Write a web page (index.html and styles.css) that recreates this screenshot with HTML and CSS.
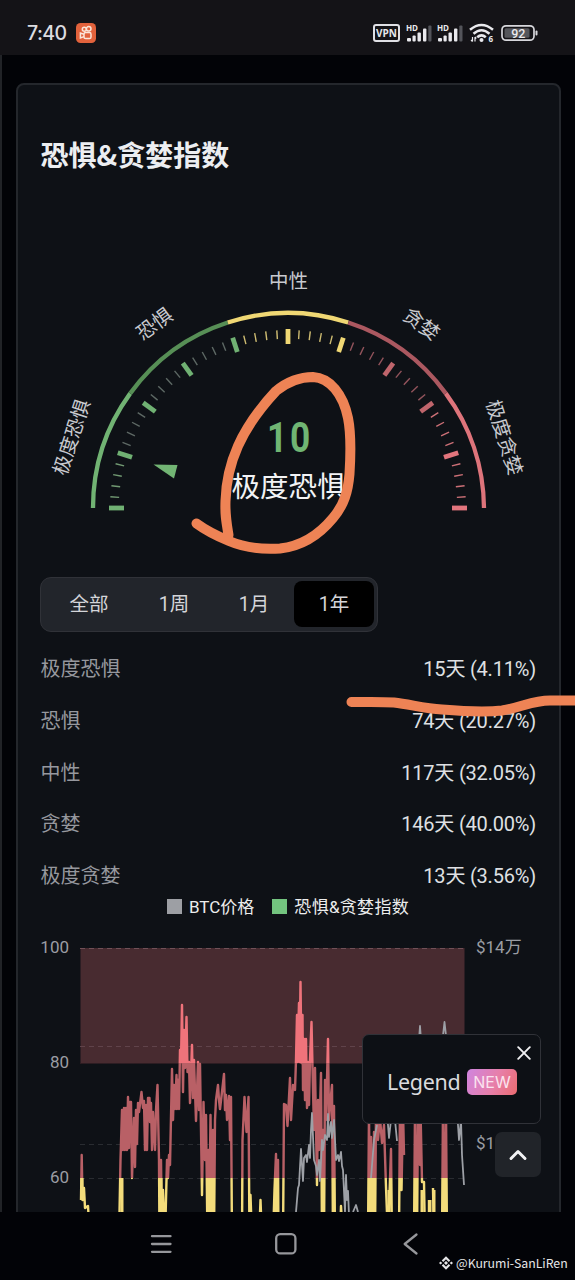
FILE: index.html
```html
<!DOCTYPE html>
<html lang="zh-CN">
<head>
<meta charset="utf-8">
<title>恐惧&amp;贪婪指数</title>
<link rel="stylesheet" href="styles.css">
</head>
<body>
<div class="phone">
  <header class="status">
    <div class="status-left">
      <span class="clock">7:40</span>
      <svg class="app-icon" width="20" height="20" viewBox="0 0 20 20"><rect width="20" height="20" rx="4.5" fill="#e2623c"/><g fill="none" stroke="#fbe5d8" stroke-width="1.5"><circle cx="8.3" cy="6.2" r="2"/><circle cx="12.7" cy="5.8" r="2.3"/><rect x="8" y="9.6" width="7" height="6" rx="1.6"/><path d="M8 11.2 4.4 10v5L8 13.6"/></g></svg>
    </div>
    <div class="status-right">
      <span class="vpn">VPN</span>
      <svg class="signal" width="27" height="20" viewBox="0 0 27 20"><text x="0" y="7.500" class="hd" textLength="12">HD</text><g fill="#e9e9ed"><rect x="1" y="15" width="4" height="3.500" rx="1"/><rect x="6.500" y="12.500" width="3.200" height="6" rx="1"/><rect x="11.500" y="9.500" width="3.400" height="9" rx="1"/><rect x="17" y="5.500" width="3.400" height="13" rx="1"/></g><rect x="22.300" y="2.500" width="3.200" height="16" rx="1" fill="#53545a"/></svg>
      <svg class="signal signal-2" width="27" height="20" viewBox="0 0 27 20"><text x="0" y="7.500" class="hd" textLength="12">HD</text><g fill="#e9e9ed"><rect x="1" y="15" width="4" height="3.500" rx="1"/><rect x="6.500" y="12.500" width="3.200" height="6" rx="1"/><rect x="11.500" y="9.500" width="3.400" height="9" rx="1"/><rect x="17" y="5.500" width="3.400" height="13" rx="1"/></g><rect x="22.300" y="2.500" width="3.200" height="16" rx="1" fill="#53545a"/></svg>
      <svg class="wifi" width="26" height="20" viewBox="0 0 26 20"><g fill="none" stroke="#e9e9ed" stroke-width="2.500"><path d="M1 6.800Q12.500-2.800 24 6.800"/><path d="M4.500 10.800Q12.500 3.800 20.500 10.800"/><path d="M8.200 14.300Q12.500 10.500 16.800 14.300"/></g><circle cx="12.500" cy="17" r="2" fill="#e9e9ed"/><path d="M3.500 14v4.500m0 0-1.500-1.500M6 18.500v-4.500m0 0 1.300 1.500" stroke="#e9e9ed" stroke-width="1.200" fill="none"/><text x="19.500" y="19" class="wifi-gen">6</text></svg>
      <svg class="battery" width="37" height="18" viewBox="0 0 37 18"><rect x="1" y="1.800" width="32" height="14.400" rx="4" fill="none" stroke="#d7d7dc" stroke-width="1.700"/><rect x="3.500" y="4.200" width="25" height="9.600" rx="1.500" fill="#55565b"/><rect x="34.500" y="6.500" width="2" height="5" rx="1" fill="#d7d7dc"/><text x="17.300" y="13.500" text-anchor="middle" class="battery-text">92</text></svg>
    </div>
  </header>

  <main class="viewport">
    <section class="card">
      <h1 class="title">恐惧&amp;贪婪指数</h1>

      <svg class="gauge" viewBox="18 175 541 395">
        <g fill="none" stroke-width="4.300">
          <path stroke="#71b373" d="M93 508A195 195 0 0 1 130.240 393.380"/>
          <path stroke="#578f56" d="M130.240 393.380A195 195 0 0 1 227.740 322.540"/>
          <path stroke="#f0d874" d="M227.740 322.540A195 195 0 0 1 348.260 322.540"/>
          <path stroke="#ab5860" d="M348.260 322.540A195 195 0 0 1 445.760 393.380"/>
          <path stroke="#de747b" d="M445.760 393.380A195 195 0 0 1 484 508"/>
        </g>
        <g id="ticks"></g>
        <g class="zone">
          <text transform="translate(71 437) rotate(-72)" y="7.500">极度恐惧</text>
          <text transform="translate(154 323.500) rotate(-36)" y="7.500">恐惧</text>
          <text transform="translate(288.500 280.500)" y="7">中性</text>
          <text transform="translate(421.500 324) rotate(36)" y="7">贪婪</text>
          <text transform="translate(504.500 437.500) rotate(72)" y="7">极度贪婪</text>
        </g>
        <path d="M153.500 464.500 177.500 465 174 478.500Z" fill="#72b574"/>
        <text class="score" transform="translate(267 451.500) scale(.82 1)">10</text>
        <text class="verdict" x="288.500" y="496.500">极度恐惧</text>
      </svg>

      <nav class="tabs">
        <span class="tab tab-wide">全部</span><span class="tab">1周</span><span class="tab">1月</span><span class="tab tab-active">1年</span>
      </nav>

      <div class="rows">
        <div class="row"><span>极度恐惧</span><span class="value">15天 (4.11%)</span></div>
        <div class="row"><span>恐惧</span><span class="value">74天 (20.27%)</span></div>
        <div class="row"><span>中性</span><span class="value">117天 (32.05%)</span></div>
        <div class="row"><span>贪婪</span><span class="value">146天 (40.00%)</span></div>
        <div class="row"><span>极度贪婪</span><span class="value">13天 (3.56%)</span></div>
      </div>

      <div class="legend">
        <span class="key"><i class="swatch swatch-btc"></i>BTC价格</span>
        <span class="key"><i class="swatch swatch-index"></i><span class="index-name">恐惧&amp;贪婪指数</span></span>
      </div>

      <svg class="chart" viewBox="18 917 541 295">
        <defs>
          <linearGradient id="level" gradientUnits="userSpaceOnUse" x1="0" y1="948" x2="0" y2="1248">
            <stop offset=".385" stop-color="#ef737b"/><stop offset=".385" stop-color="#b96066"/>
            <stop offset=".7667" stop-color="#b96066"/><stop offset=".7667" stop-color="#f3dc7b"/>
          </linearGradient>
        </defs>
        <rect x="80.500" y="948" width="384" height="115.500" fill="#482b30"/>
        <g stroke-dasharray="5 4" stroke-width="1">
          <path d="M80 948.500H465" stroke="#715158"/>
          <path d="M80 1046.500H465" stroke="#60434a"/>
          <path d="M80 1063.500H465" stroke="#2c1c21"/>
          <path d="M80 1144.500H465M80 1178.500H465" stroke="#292c31"/>
        </g>
        <g class="axis">
          <text x="69" y="953" text-anchor="end">100</text>
          <text x="69" y="1068" text-anchor="end">80</text>
          <text x="69" y="1183" text-anchor="end">60</text>
          <text x="476" y="952.500">$14万</text>
          <text x="476" y="1149">$12万</text>
        </g>
        <path fill="none" stroke="url(#level)" stroke-width="2.400" stroke-linejoin="round" d="M81 1200 81.700 1155 82.500 1200 84 1188 85 1208 88 1206 90 1240M119 1240 120.500 1160 122 1110 123 1150 124 1108 125 1150 126 1108 127 1150 128 1097 129 1148 130 1102 131 1102 132 1178 134 1118 135 1167 136 1110 137 1144 138 1103 139 1112 141.500 1092 143 1108 144 1101 145 1150 146 1105 147 1150 148 1098 149.500 1098 150 1122 151 1103 152 1150 153 1112 155 1150 156 1110 157.500 1085 159 1160 159.500 1240 161 1160 162 1240 163 1190 165 1240 167 1160 168 1178 169 1155 170 1165 172 1069 173 1120 174 1085 175 1109 176.500 1075 177 1109 178 1080 179 1109 180 1050 181 1062 182 1005 183 1092 184 1030 185 1068 186.500 1017 187.500 1072 189 1062 190 1103 192 1045 193 1098 194 1060 196 1121 198 1062 199 1110 200 1064 202 1195 203.500 1102 205 1160 206 1115 207.500 1240 208.500 1150 209 1240 210.500 1115 212 1240 213 1130 214 1240 215 1120 216 1100 218 1085 219 1100 220 1109 222 1092 224 1074 225 1110 226 1095 227 1120 229 1096 230 1140 231 1097 232 1240 M242 1240 242.500 1140 244.500 1097 246.500 1132 248.500 1097 249.500 1240 250.500 1195 252 1240M259 1240 260.500 1200 262 1240M273 1240 274.500 1190 276 1154 276.500 1240 278 1160 278.500 1240M283 1240 284 1104 286 1105 287.500 1126 290 1078 291 1120 293 1085 295 1090 296 1060 297 1015 297.500 1062 299 1003 299.500 1062 300.500 982 301.500 1063 302.500 1015 303 1090 304 1039 305 1100 306 1039 307 1108 308 1062 309 1105 310 1060 311.500 1022 313 1090 314 1130 315 1068 317 1185 318 1100 319 1150 321 1073 322 1240 323 1130 324 1240 325 1080 326 1120 328 1039 329 1120 331 1095 332 1085 333 1240 334 1106 335 1240M340 1240 341 1206 343 1240M368 1240 369 1110 370 1240 371 1137 373 1240 374 1132 375 1240 376 1110 378 1140 380 1118 382 1143 384 1125 386 1187 388 1240 391 1149 392 1240M399 1240 400 1100 401.500 1190 403 1110 404 1155M414 1240 415 1110 417 1240 418 1110 420 1165 420.500 1110 422 1182 424 1182 425 1240M429 1200V1240M433 1188 434 1240M442 1240 443 1105 445 1240 446 1110 447 1240"/>
        <path fill="none" stroke="#f3dc7b" stroke-width="3" d="M82 1178V1200M122 1178V1212M161 1178V1212M208.500 1178V1212M212.500 1178V1212M275.500 1186V1212M370 1178V1212M374 1178V1212M389 1190V1212M416 1178V1212M422 1190V1212M430 1200V1212M434 1190V1212M445 1178V1212"/>
        <path fill="none" stroke="#9da0a6" stroke-width="1.800" stroke-linejoin="round" d="M296 1212 298 1188 299 1185 301 1149 303 1181 304 1158 306 1155 307 1162 309 1145 310 1158 311 1130 312 1113 314 1160 316 1166 317 1175 319 1160 320 1181 322 1140 323 1150 325 1135 327 1140 328 1114 329 1137 331 1122 332 1138 334 1120 336 1160 338 1155 339 1161 341 1152 342 1166 343 1170 345 1212 346 1175 347 1200 348 1191 349 1215M353 1212 356 1205 358 1212M371 1178 374 1140 377 1125M387 1112 389 1138 391 1120M395 1120 397 1141M419 1040 420 1026 421 1040M442.500 1040 444.500 1022 446.500 1040M457 1110 459 1140 461 1120 462 1155 464 1185"/>
      </svg>
    </section>
  </main>

  <footer class="navbar">
    <svg class="nav-icons" viewBox="0 0 575 68"><g fill="none" stroke="#96979b" stroke-width="2.300" stroke-linecap="round" stroke-linejoin="round"><path d="M152 24.200H170.500M152 32H170.500M152 39.800H170.500"/><rect x="276.200" y="22.200" width="19.200" height="19.200" rx="4"/><path d="M416.500 22.500 404.700 32 416.500 41.500"/></g></svg>
  </footer>

  <svg class="scribble" viewBox="0 0 575 1280"><g fill="none" stroke="#ee8355" stroke-width="10" stroke-linecap="round" stroke-linejoin="round"><path d="M228.500 535C226 520 225 515 225.500 501C226 482 230 464 238 446C247 426 262 406 276 391C287 382 300 377 313 377C330 378 343 394 348 418C351 433 351 450 349.500 474C348 492 344 505 333 518C319 535 303 546 280 548.500C258 550 243 547 229 541C217 536 208 532 196.500 523.500"/><path d="M351.500 702C368 702 380 701.500 394 702.500C411 704.500 424 708.500 442 709.500C460 711 484 712.500 502 710.500C522 707.500 532 700.500 550 700.500H585"/></g></svg>

  <aside class="popup">
    <svg class="close" width="14" height="14" viewBox="0 0 14 14"><path d="M1.200 1.200 12.800 12.800M12.800 1.200 1.200 12.800" stroke="#f0f0f2" stroke-width="1.900" stroke-linecap="round"/></svg>
    <span class="popup-label">Legend</span><span class="badge">NEW</span>
  </aside>
  <div class="to-top"><svg width="20" height="14" viewBox="0 0 20 14"><path d="M3 10.500 10 3.500 17 10.500" fill="none" stroke="#f2f2f4" stroke-width="3" stroke-linecap="round" stroke-linejoin="round"/></svg></div>
  <div class="credit"><svg width="14" height="14" viewBox="0 0 14 14"><path d="M3.500 5.200 7 1.700 10.500 5.200M3.500 8.800 7 12.300 10.500 8.800" fill="none" stroke="#e4e4e6" stroke-width="2.200"/><path d="M7 5 9 7 7 9 5 7ZM1.600 5.400 3.200 7 1.600 8.600 0 7ZM12.400 5.400 14 7 12.400 8.600 10.800 7Z" fill="#e4e4e6"/></svg><span>@Kurumi-SanLiRen</span></div>
</div>
<script src="gauge.js"></script>
</body>
</html>
```
FILE: styles.css
```css
* { box-sizing: border-box; }
body { margin: 0; background: #020307; font-family: Roboto, "Noto Sans CJK SC", sans-serif; color: #e6e7ea; }
svg { display: block; }
.phone { position: relative; width: 575px; height: 1280px; overflow: hidden; display: flex; flex-direction: column; }

.status { height: 55px; flex: none; background: #141317; display: flex; justify-content: space-between; padding: 10px 37px 0 27px; }
.status-left, .status-right { display: flex; align-items: center; }
.clock { font: 500 19.500px Inter, sans-serif; letter-spacing: -.6px; color: #dcdce0; }
.app-icon { margin-left: 10px; }
.vpn { width: 27px; height: 18px; border: 2px solid #e0e0e5; border-radius: 3px; font: 700 10px/14.5px "Open Sans", sans-serif; text-align: center; margin-right: 6px; }
.signal-2 { margin-left: 4px; }
.hd { font: 700 8px "Open Sans", sans-serif; fill: #e9e9ed; }
.wifi { margin-left: 5px; }
.wifi-gen { font: 700 8px "Open Sans", sans-serif; fill: #e9e9ed; }
.battery { margin-left: 6px; }
.battery-text { font: 500 12.500px Roboto, sans-serif; fill: #e9e9ed; }

.viewport { height: 1157px; flex: none; overflow: hidden; border-left: 2px solid #212327; padding: 27.500px 14px 0; }
.card { width: 545px; height: 1150px; border: 2px solid #24272c; border-radius: 8px; background: #0e1116; padding-top: 49.500px; }
.title { margin: 0 0 0 22.500px; height: 41px; font: 700 28px/41px "Noto Sans CJK SC", sans-serif; color: #eceef1; }
.gauge { width: 541px; height: 395px; }
.zone text { font-size: 19.500px; text-anchor: middle; fill: #c8cacf; }
.score { font-size: 43px; font-weight: 700; letter-spacing: 3.500px; fill: #70b573; }
.verdict { font-size: 28.500px; text-anchor: middle; fill: #f2f3f5; }

.tabs { display: flex; width: 338px; height: 55px; margin: 6.500px 0 0 22px; padding: 3px; border: 1px solid #303238; border-radius: 11px; background: #22252b; }
.tab { width: 80px; height: 46px; line-height: 48px; text-align: center; font-size: 19.500px; color: #d4d5d9; }
.tab-wide { width: 90px; }
.tab-active { background: #000; border-radius: 8px; }

.rows { margin: 10.500px 23px 0 22.500px; }
.row { height: 51.700px; display: flex; justify-content: space-between; align-items: center; font-size: 20px; color: #96989e; }
.value { color: #dfe0e3; letter-spacing: -.2px; }

.legend { height: 20px; margin-top: -3.500px; display: flex; gap: 18px; padding-left: 149px; font-size: 17px; line-height: 20px; color: #eceded; }
.key { display: flex; align-items: center; gap: 7px; }
.index-name { letter-spacing: .3px; }
.swatch { width: 15px; height: 15px; }
.swatch-btc { background: #9d9fa4; }
.swatch-index { background: #73c47f; }
.chart { width: 541px; height: 295px; }
.axis text { font-size: 17px; fill: #9b9da3; }

.navbar { height: 68px; flex: none; background: #020307; }
.nav-icons { width: 575px; height: 68px; }

.scribble { position: absolute; inset: 0; width: 575px; height: 1280px; }
.popup { position: absolute; left: 362px; top: 1034px; width: 179px; height: 90px; border: 1.500px solid #303238; border-radius: 7px; background: #0d1015; display: flex; align-items: center; padding: 7px 0 0 24px; }
.close { position: absolute; right: 9.500px; top: 11px; }
.popup-label { width: 80px; font: 400 21.500px/26px "Noto Sans", sans-serif; color: #dadbde; letter-spacing: -.3px; padding-bottom: 1px; }
.badge { width: 50px; height: 26px; border-radius: 5px; background: linear-gradient(115deg, #cf85e0, #e77fa9 55%, #ea6b70); font: 400 16px/26px Inter, sans-serif; text-align: center; color: #fbe3ef; margin-bottom: 1px; }
.to-top { position: absolute; left: 495px; top: 1132px; width: 46px; height: 45px; border-radius: 7px; background: #212429; display: flex; align-items: center; justify-content: center; }
.credit { position: absolute; left: 439px; top: 1254px; display: flex; align-items: center; gap: 3px; font: 400 12.300px/18px "Noto Sans CJK SC", sans-serif; color: #e6e6e8; white-space: nowrap; }
```
FILE: gauge.js
```js
const group = document.getElementById("ticks");
const strong = a => a <= 72 ? "#70b173" : a <= 108 ? "#f0d874" : a <= 144 ? "#bf656c" : "#e2757d";
const faint = a => a < 18 ? "#729a73" : a < 72 ? "#5e6965" : a <= 108 ? "#cfbd72" : a < 144 ? "#93545c" : "#cd7077";
for (let i = 0; i <= 50; i++) {
  const major = i % 5 === 0;
  const angle = i * 3.6;
  const line = document.createElementNS("http://www.w3.org/2000/svg", "line");
  line.setAttribute("x1", major ? 109 : 110);
  line.setAttribute("x2", major ? 124 : 118.8);
  line.setAttribute("y1", 508);
  line.setAttribute("y2", 508);
  line.setAttribute("stroke", major ? strong(angle) : faint(angle));
  line.setAttribute("stroke-width", major ? 4.8 : 1.4);
  line.setAttribute("transform", `rotate(${angle} 288 508)`);
  group.appendChild(line);
}
```
